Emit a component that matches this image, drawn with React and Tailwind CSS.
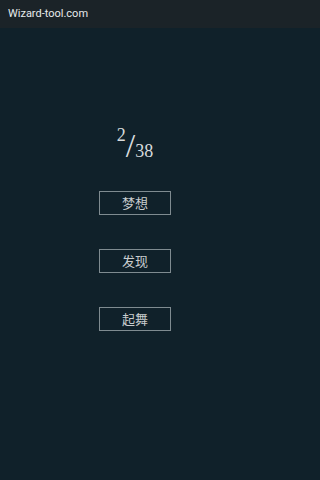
import React from "react";

const words = ["梦想", "发现", "起舞"];

function App() {
  return (
    <div className="w-full h-screen bg-[#10212a] flex flex-col overflow-hidden">
      <div
        className="h-[28px] bg-[#1b2328] flex items-center pl-2 text-[11px] text-[#e8ebec]"
        style={{ fontFamily: "Roboto, 'Liberation Sans', sans-serif" }}
      >
        Wizard-tool.com
      </div>

      <div className="w-[270px] flex flex-col items-center">
        {/* fraction: current / total */}
        <div
          className="mt-[101px] flex items-baseline leading-none text-[18px] text-[#d7dbdd]"
          style={{ fontFamily: "'Liberation Serif', serif" }}
        >
          <span className="relative bottom-[16px]">2</span>
          <span className="text-[34px]">/</span>
          <span>38</span>
        </div>

        <div className="mt-[28px] flex flex-col gap-[34px]">
          {words.map((w) => (
            <div
              key={w}
              className="w-[72px] h-[24px] border border-[#7f8b90] flex items-center justify-center text-[13px] text-[#c9cdcf]"
              style={{ fontFamily: "'Noto Sans CJK SC', sans-serif" }}
            >
              {w}
            </div>
          ))}
        </div>
      </div>
    </div>
  );
}

export default App;
